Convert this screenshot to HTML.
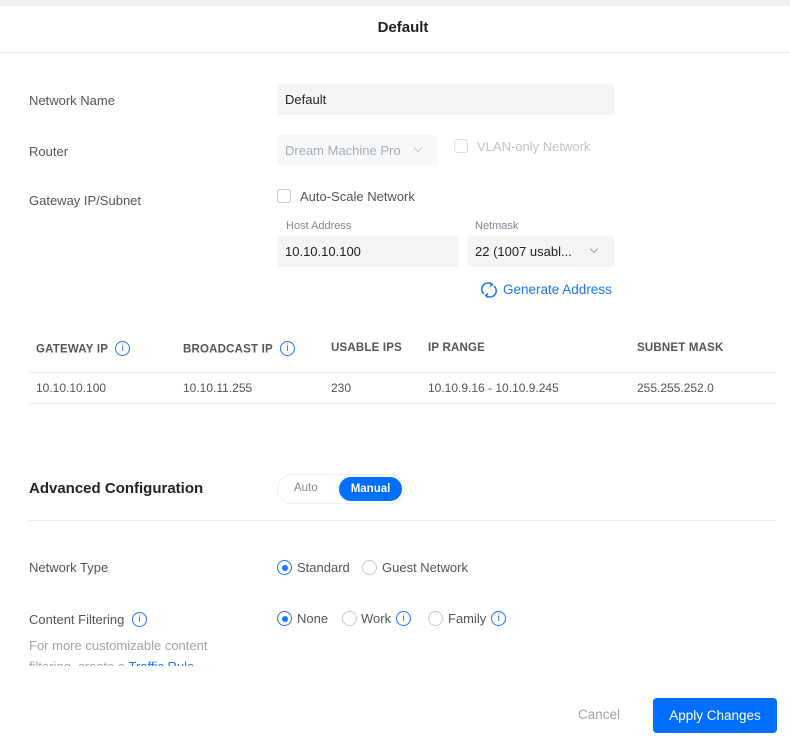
<!DOCTYPE html>
<html><head><meta charset="utf-8"><style>
*{box-sizing:border-box;margin:0;padding:0}
body{width:790px;height:745px;background:#fff;font-family:"Liberation Sans",sans-serif;color:#50565e;position:relative;overflow:hidden;font-size:13px}
.a{position:absolute;white-space:nowrap}
.lbl{font-size:13px;color:#50565e}
.inp{position:absolute;background:#f4f5f6;border-radius:4px;font-size:13px;color:#212327;padding-left:8px;display:flex;align-items:center}
.cb{position:absolute;width:14px;height:14px;border:1px solid #c7cbd0;border-radius:3px;background:#fff}
.th{font-size:11.5px;color:#50565e;font-weight:bold;letter-spacing:.2px}
.td{font-size:12px;color:#50565e}
.info{display:inline-block;width:15px;height:15px;border:1.3px solid #1a75ff;border-radius:50%;color:#1a75ff;font-size:10px;text-align:center;line-height:13px;vertical-align:middle;font-weight:normal;margin-left:4px;position:relative;top:-1px}
.rad{position:absolute;width:15px;height:15px;border:1px solid #c7cbd0;border-radius:50%;background:#fff}
.rad.on{border-color:#1a75ff}
.rad.on::after{content:"";position:absolute;left:3.5px;top:3.5px;width:6px;height:6px;border-radius:50%;background:#1a75ff}
.ch{position:absolute;width:6px;height:6px;border-right:1px solid #a0a4aa;border-bottom:1px solid #a0a4aa;transform:rotate(45deg)}
</style></head><body>
<div class="a" style="left:0;top:0;width:790px;height:6px;background:#f1f2f4"></div>
<div class="a" style="left:0;top:19px;width:806px;text-align:center;font-size:15px;font-weight:bold;color:#212327">Default</div>
<div class="a" style="left:0;top:52px;width:790px;height:1px;background:#ebedf0"></div>

<div class="a lbl" style="left:29px;top:93px">Network Name</div>
<div class="inp" style="left:277px;top:84px;width:337px;height:31px">Default</div>

<div class="a lbl" style="left:29px;top:144px">Router</div>
<div class="inp" style="left:277px;top:135px;width:161px;height:31px;color:#a9adb3;background:#f7f8f9">Dream Machine Pro</div>
<div class="ch" style="left:415px;top:145px;border-color:#c7cbd0"></div>
<div class="cb" style="left:454px;top:139px;border-color:#dcdfe3"></div>
<div class="a" style="left:477px;top:139px;color:#c0c4c9">VLAN-only Network</div>

<div class="a lbl" style="left:29px;top:193px">Gateway IP/Subnet</div>
<div class="cb" style="left:277px;top:189px"></div>
<div class="a" style="left:300px;top:189px;color:#50565e">Auto-Scale Network</div>
<div class="a" style="left:286px;top:220px;font-size:11px;color:#808893">Host Address</div>
<div class="a" style="left:475px;top:220px;font-size:11px;color:#808893">Netmask</div>
<div class="inp" style="left:277px;top:236px;width:182px;height:31px">10.10.10.100</div>
<div class="inp" style="left:467px;top:236px;width:147px;height:31px">22 (1007 usabl...</div>
<div class="ch" style="left:591px;top:246px"></div>
<svg class="a" style="left:480px;top:281px" width="18" height="18" viewBox="0 0 18 18"><path d="M4 13A6 6 0 0 1 12 3.5M14 5A6 6 0 0 1 6 14.5" fill="none" stroke="#1a75ff" stroke-width="1.5"/><path d="M10 1.5l2.5 2-2.5 2M8 16.5l-2.5-2 2.5-2" fill="none" stroke="#1a75ff" stroke-width="1.3"/></svg>
<div class="a" style="left:503px;top:282px;color:#1a75ff;font-size:13.5px">Generate Address</div>

<div class="a th" style="left:36px;top:342px">GATEWAY IP <span class="info">i</span></div>
<div class="a th" style="left:183px;top:342px">BROADCAST IP <span class="info">i</span></div>
<div class="a th" style="left:331px;top:342px">USABLE IPS</div>
<div class="a th" style="left:428px;top:342px">IP RANGE</div>
<div class="a th" style="left:637px;top:342px">SUBNET MASK</div>
<div class="a" style="left:28px;top:372px;width:748px;height:1px;background:#ebedf0"></div>
<div class="a td" style="left:36px;top:381px">10.10.10.100</div>
<div class="a td" style="left:183px;top:381px">10.10.11.255</div>
<div class="a td" style="left:331px;top:381px">230</div>
<div class="a td" style="left:428px;top:381px">10.10.9.16 - 10.10.9.245</div>
<div class="a td" style="left:637px;top:381px">255.255.252.0</div>
<div class="a" style="left:28px;top:403px;width:748px;height:1px;background:#ebedf0"></div>

<div class="a" style="left:29px;top:480px;font-size:15px;font-weight:bold;color:#212327">Advanced Configuration</div>
<div class="a" style="left:277px;top:474px;width:128px;height:30px;border:1px solid #eef0f2;border-radius:15px"></div>
<div class="a" style="left:294px;top:482px;font-size:11.5px;color:#808893">Auto</div>
<div class="a" style="left:339px;top:477px;width:63px;height:24px;border-radius:12px;background:#006fff;color:#fff;font-size:11.5px;font-weight:bold;text-align:center;line-height:24px">Manual</div>
<div class="a" style="left:28px;top:520px;width:748px;height:1px;background:#ebedf0"></div>

<div class="a lbl" style="left:29px;top:560px">Network Type</div>
<div class="rad on" style="left:277px;top:560px"></div>
<div class="a" style="left:297px;top:560px">Standard</div>
<div class="rad" style="left:362px;top:560px"></div>
<div class="a" style="left:382px;top:560px">Guest Network</div>

<div class="a lbl" style="left:29px;top:612px">Content Filtering <span class="info">i</span></div>
<div class="rad on" style="left:277px;top:611px"></div>
<div class="a" style="left:297px;top:611px">None</div>
<div class="rad" style="left:342px;top:611px"></div>
<div class="a" style="left:361px;top:611px">Work<span class="info" style="margin-left:5px">i</span></div>
<div class="rad" style="left:428px;top:611px"></div>
<div class="a" style="left:448px;top:611px">Family<span class="info" style="margin-left:5px">i</span></div>
<div class="a" style="left:29px;top:638px;color:#a0a5ab">For more customizable content</div>
<div class="a" style="left:0;top:657px;width:300px;height:9px;overflow:hidden"><div class="a" style="left:29px;top:2px;color:#a0a5ab">filtering, create a <span style="color:#1a75ff">Traffic Rule</span></div></div>

<div class="a" style="left:578px;top:707px;font-size:13.5px;color:#a0a5ab">Cancel</div>
<div class="a" style="left:653px;top:698px;width:124px;height:35px;background:#006fff;border-radius:4px;color:#fff;font-size:13.5px;text-align:center;line-height:35px">Apply Changes</div>
</body></html>
